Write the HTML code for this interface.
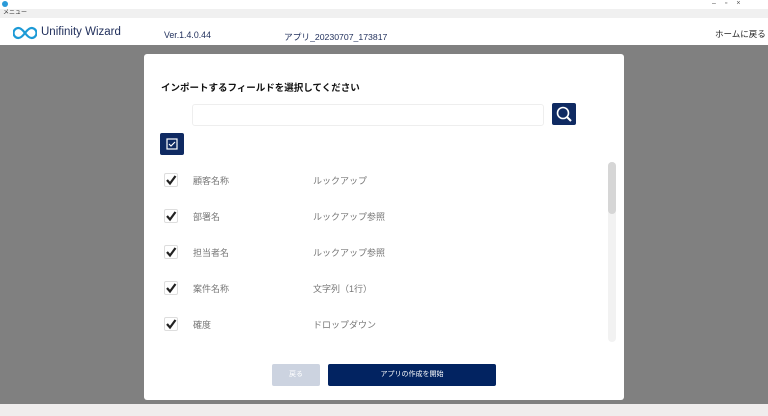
<!DOCTYPE html>
<html><head><meta charset="utf-8"><style>
*{margin:0;padding:0;box-sizing:border-box}
body{width:768px;height:416px;overflow:hidden;position:relative;background:#808080;font-family:"Liberation Sans","Noto Sans CJK JP",sans-serif;}
.a{position:absolute}
.row{position:absolute;left:0;width:480px;height:20px}
.cb{position:absolute;left:20px;top:0;width:14px;height:14px;border:1px solid #ddd;border-radius:2px;background:#fff}
.n{position:absolute;left:49px;top:1px;font-size:9px;color:#777}
.t{position:absolute;left:169px;top:1px;font-size:9px;color:#777}
</style></head><body>
<div class="a" style="left:0;top:0;width:768px;height:9px;background:#fff"></div>
<div class="a" style="left:2px;top:1px;width:6px;height:6px;border-radius:50%;background:#2a9ad8"></div>
<div class="a" style="left:712px;top:0;font-size:7px;color:#555;letter-spacing:9px">–▫×</div>
<div class="a" style="left:0;top:9px;width:768px;height:9px;background:#f0f0f0;font-size:6px;color:#333;padding-left:3px;line-height:9px">メニュー</div>
<div class="a" style="left:0;top:18px;width:768px;height:27px;background:#fff"></div>
<svg class="a" style="left:13px;top:26px" width="24" height="14" viewBox="0 0 24 14"><path d="M12 7C9 3 7 2 5.5 2A5 5 0 0 0 5.5 12C7 12 9 11 12 7C15 3 17 2 18.5 2A5 5 0 0 1 18.5 12C17 12 15 11 12 7Z" fill="none" stroke="#1d9ad6" stroke-width="2.2"/></svg>
<div class="a" style="left:41px;top:26px;font-size:11.5px;color:#1e2d5a">Unifinity Wizard</div>
<div class="a" style="left:164px;top:30px;font-size:8.8px;color:#1e2d5a">Ver.1.4.0.44</div>
<div class="a" style="left:284px;top:30px;font-size:8.7px;color:#1e2d5a">アプリ_20230707_173817</div>
<div class="a" style="left:715px;top:28px;font-size:8.5px;color:#222">ホームに戻る</div>
<div class="a" style="left:0;top:404px;width:768px;height:12px;background:#f0eded"></div>
<div class="a" style="left:144px;top:54px;width:480px;height:346px;background:#fff;border-radius:3px">
 <div class="a" style="left:17px;top:26px;font-size:9.5px;color:#111;font-weight:bold">インポートするフィールドを選択してください</div>
 <div class="a" style="left:48px;top:50px;width:352px;height:22px;border:1px solid #eee;border-radius:3px"></div>
 <div class="a" style="left:408px;top:49px;width:24px;height:22px;background:#0f2a62;border-radius:2px">
  <svg width="24" height="22"><circle cx="11" cy="10" r="5.5" fill="none" stroke="#fff" stroke-width="1.6"/><path d="M15 14L19 18" stroke="#fff" stroke-width="2"/></svg></div>
 <div class="a" style="left:16px;top:79px;width:24px;height:22px;background:#0f2a62;border-radius:2px">
  <svg width="24" height="22"><rect x="7" y="6" width="10" height="10" fill="none" stroke="#fff" stroke-width="1.2"/><path d="M9 11L11 13L15 9" fill="none" stroke="#fff" stroke-width="1.2"/></svg></div>
 <div class="row" style="top:119px"><div class="cb"></div><svg class="a" style="left:20px;top:0" width="14" height="14"><path d="M3 7L6 10.5L11.5 3" fill="none" stroke="#222" stroke-width="2.2"/></svg><div class="n">顧客名称</div><div class="t">ルックアップ</div></div>
 <div class="row" style="top:155px"><div class="cb"></div><svg class="a" style="left:20px;top:0" width="14" height="14"><path d="M3 7L6 10.5L11.5 3" fill="none" stroke="#222" stroke-width="2.2"/></svg><div class="n">部署名</div><div class="t">ルックアップ参照</div></div>
 <div class="row" style="top:191px"><div class="cb"></div><svg class="a" style="left:20px;top:0" width="14" height="14"><path d="M3 7L6 10.5L11.5 3" fill="none" stroke="#222" stroke-width="2.2"/></svg><div class="n">担当者名</div><div class="t">ルックアップ参照</div></div>
 <div class="row" style="top:227px"><div class="cb"></div><svg class="a" style="left:20px;top:0" width="14" height="14"><path d="M3 7L6 10.5L11.5 3" fill="none" stroke="#222" stroke-width="2.2"/></svg><div class="n">案件名称</div><div class="t">文字列（1行）</div></div>
 <div class="row" style="top:263px"><div class="cb"></div><svg class="a" style="left:20px;top:0" width="14" height="14"><path d="M3 7L6 10.5L11.5 3" fill="none" stroke="#222" stroke-width="2.2"/></svg><div class="n">確度</div><div class="t">ドロップダウン</div></div>
 <div class="a" style="left:464px;top:108px;width:8px;height:180px;background:#f2f2f2;border-radius:4px"></div>
 <div class="a" style="left:464px;top:108px;width:8px;height:52px;background:#d6d6d6;border-radius:4px"></div>
 <div class="a" style="left:128px;top:310px;width:48px;height:22px;background:#ccd3e0;border-radius:2px;color:#fff;font-size:7px;text-align:center;line-height:22px">戻る</div>
 <div class="a" style="left:184px;top:310px;width:168px;height:22px;background:#022361;border-radius:2px;color:#fff;font-size:7px;text-align:center;line-height:22px">アプリの作成を開始</div>
</div>
</body></html>
